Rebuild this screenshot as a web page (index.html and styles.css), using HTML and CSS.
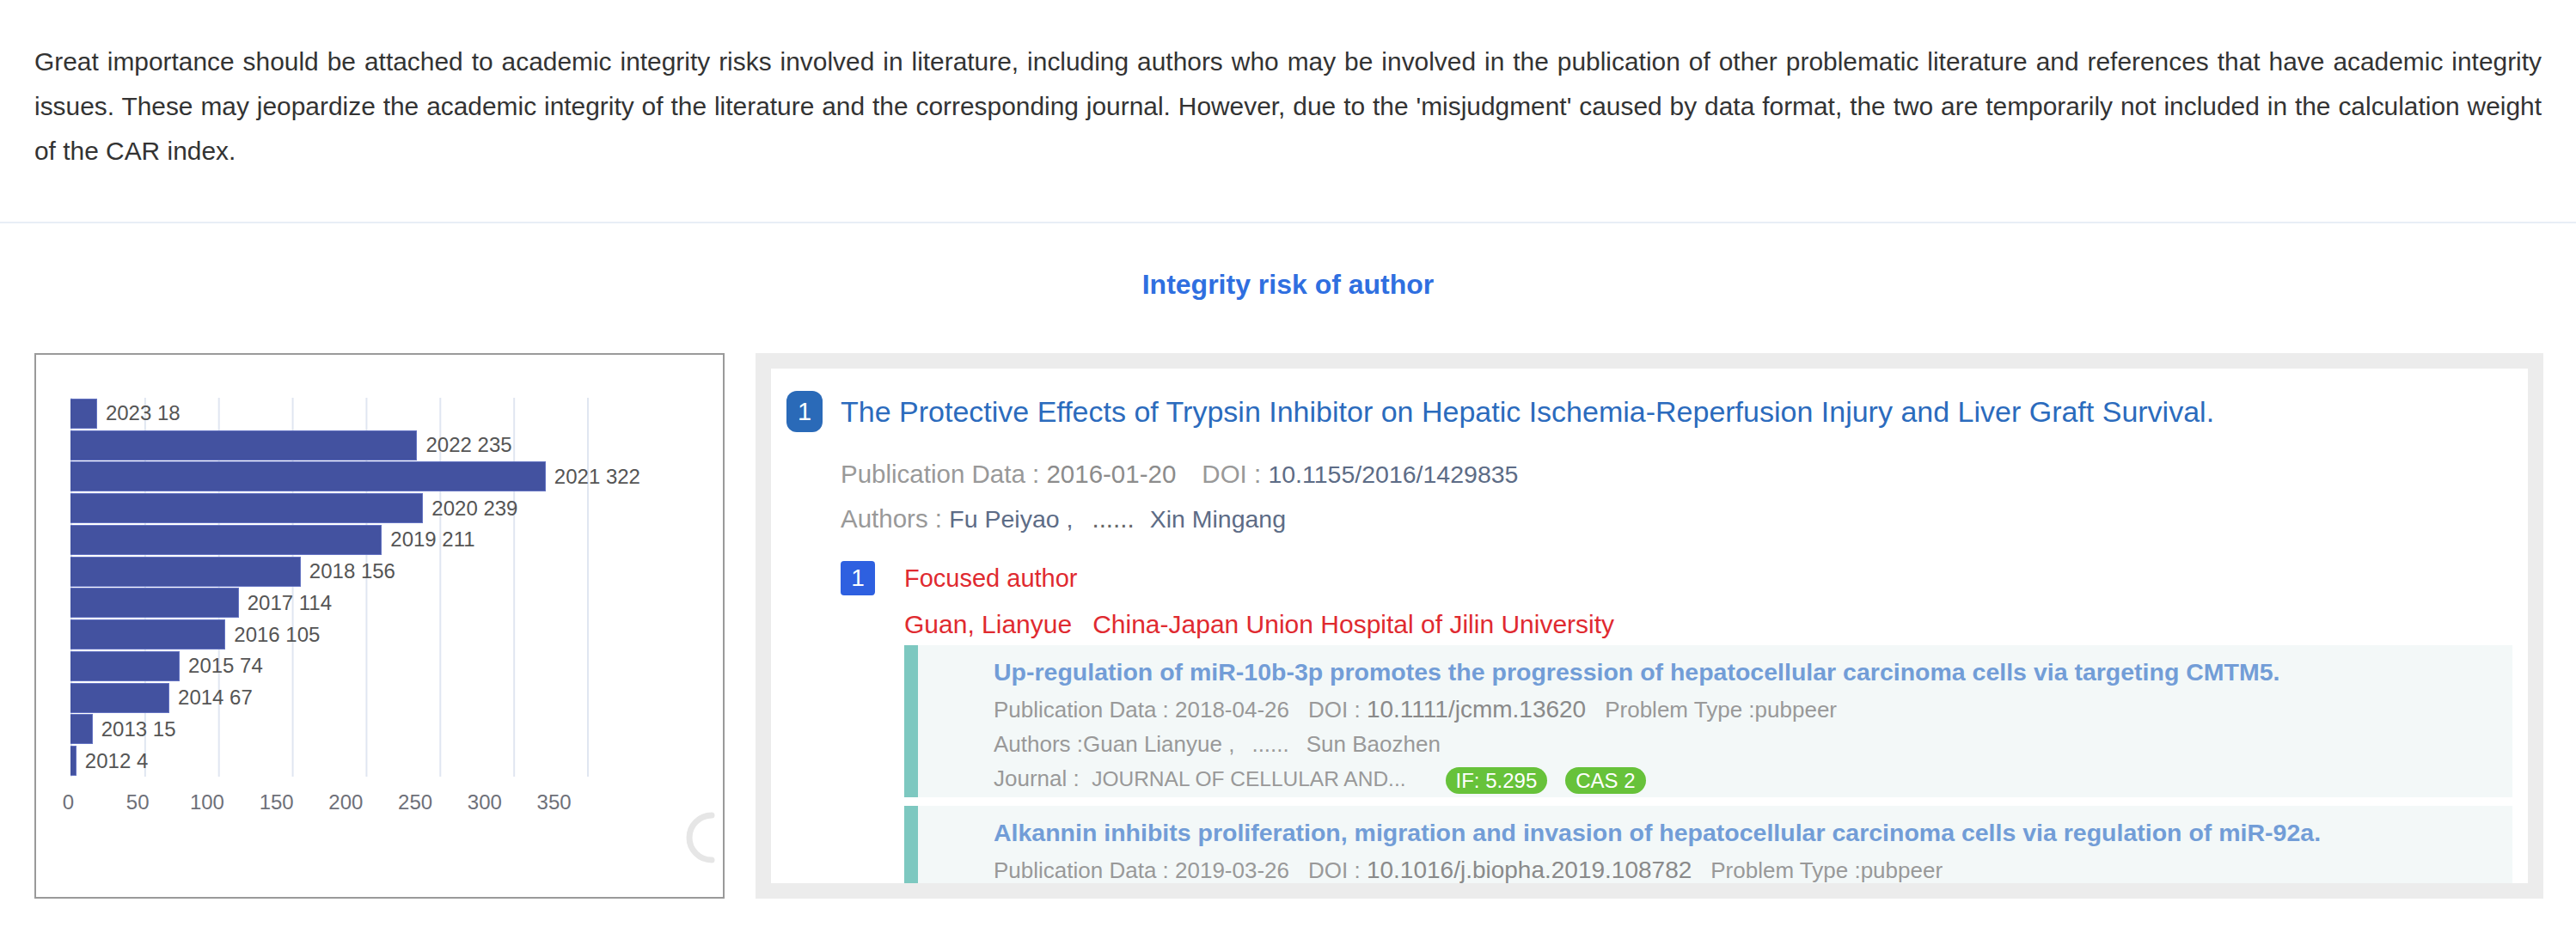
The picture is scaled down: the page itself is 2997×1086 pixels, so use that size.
FILE: index.html
```html
<!DOCTYPE html>
<html lang="en">
<head>
    <meta charset="UTF-8">
    <title>Integrity risk of author</title>
    <link rel="stylesheet" href="styles.css">
</head>
<body>
    <div class="notice">
        <p>Great importance should be attached to academic integrity risks involved in literature, including authors who may be involved in the publication of other problematic literature and references that have academic integrity issues. These may jeopardize the academic integrity of the literature and the corresponding journal. However, due to the 'misjudgment' caused by data format, the two are temporarily not included in the calculation weight of the CAR index.</p>
    </div>

    <h2 class="section-title">Integrity risk of author</h2>

    <div class="risk-row">
        <!-- yearly count chart -->
        <div class="chart-box">
            <div class="plot">
                <div class="bars">
                    <div class="bar-row"><div class="bar" style="--v:18"></div><span class="bar-label">2023 18</span></div>
                    <div class="bar-row"><div class="bar" style="--v:235"></div><span class="bar-label">2022 235</span></div>
                    <div class="bar-row"><div class="bar" style="--v:322"></div><span class="bar-label">2021 322</span></div>
                    <div class="bar-row"><div class="bar" style="--v:239"></div><span class="bar-label">2020 239</span></div>
                    <div class="bar-row"><div class="bar" style="--v:211"></div><span class="bar-label">2019 211</span></div>
                    <div class="bar-row"><div class="bar" style="--v:156"></div><span class="bar-label">2018 156</span></div>
                    <div class="bar-row"><div class="bar" style="--v:114"></div><span class="bar-label">2017 114</span></div>
                    <div class="bar-row"><div class="bar" style="--v:105"></div><span class="bar-label">2016 105</span></div>
                    <div class="bar-row"><div class="bar" style="--v:74"></div><span class="bar-label">2015 74</span></div>
                    <div class="bar-row"><div class="bar" style="--v:67"></div><span class="bar-label">2014 67</span></div>
                    <div class="bar-row"><div class="bar" style="--v:15"></div><span class="bar-label">2013 15</span></div>
                    <div class="bar-row"><div class="bar" style="--v:4"></div><span class="bar-label">2012 4</span></div>
                </div>
                <div class="x-axis">
                    <span>0</span><span>50</span><span>100</span><span>150</span><span>200</span><span>250</span><span>300</span><span>350</span>
                </div>
            </div>
            <svg class="spinner" width="70" height="70" viewBox="0 0 70 70">
                <path d="M35 9 A26 26 0 0 0 35 61" fill="none" stroke="#e6e6e6" stroke-width="7" stroke-linecap="round"/>
            </svg>
        </div>

        <!-- literature list -->
        <div class="list-panel">
            <div class="list-inner">
                <div class="article">
                    <div class="article-head">
                        <span class="num-badge">1</span>
                        <span class="article-title">The Protective Effects of Trypsin Inhibitor on Hepatic Ischemia-Reperfusion Injury and Liver Graft Survival.</span>
                    </div>
                    <div class="article-meta">
                        <div><span class="lbl">Publication Data : </span><span class="val">2016-01-20</span><span class="lbl sep">DOI : </span><span class="link">10.1155/2016/1429835</span></div>
                        <div><span class="lbl">Authors : </span><span class="link">Fu Peiyao</span><span class="link"> ,</span><span class="dots">......</span><span class="link">Xin Mingang</span></div>
                    </div>
                    <div class="focused">
                        <span class="sq-badge">1</span>
                        <span class="focused-label">Focused author</span>
                    </div>
                    <div class="focused-name"><span>Guan, Lianyue</span><span>China-Japan Union Hospital of Jilin University</span></div>

                    <div class="ref-card">
                        <div class="ref-title">Up-regulation of miR-10b-3p promotes the progression of hepatocellular carcinoma cells via targeting CMTM5.</div>
                        <div class="ref-line">Publication Data : 2018-04-26<span class="gap">DOI : </span><span class="ref-doi">10.1111/jcmm.13620</span><span class="gap">Problem Type :pubpeer</span></div>
                        <div class="ref-line">Authors :Guan Lianyue ,<span class="ref-dots">......</span>Sun Baozhen</div>
                        <div class="ref-line">Journal :&nbsp; <span class="journal">JOURNAL OF CELLULAR AND...</span><span class="tag first">IF: 5.295</span><span class="tag">CAS 2</span></div>
                    </div>
                    <div class="ref-card">
                        <div class="ref-title">Alkannin inhibits proliferation, migration and invasion of hepatocellular carcinoma cells via regulation of miR-92a.</div>
                        <div class="ref-line">Publication Data : 2019-03-26<span class="gap">DOI : </span><span class="ref-doi">10.1016/j.biopha.2019.108782</span><span class="gap">Problem Type :pubpeer</span></div>
                        <div class="ref-line">Authors :Guan Lianyue ,<span class="ref-dots">......</span>Sun Baozhen</div>
                    </div>
                </div>
            </div>
        </div>
    </div>
</body>
</html>
```

FILE: styles.css
```css
* {
    margin: 0;
    padding: 0;
    box-sizing: border-box;
}

body {
    font-family: 'Liberation Sans', Arial, sans-serif;
    background: #fff;
    color: #333;
}

.notice {
    padding: 46px 40px 56px;
    border-bottom: 2px solid #e8eef6;
}

.notice p {
    font-size: 29.9px;
    line-height: 52px;
    text-align: justify;
    color: #333;
}

.section-title {
    margin: 51px 0 60px;
    text-align: center;
    font-size: 32px;
    line-height: 40px;
    font-weight: 600;
    color: #2f6fe0;
}

.risk-row {
    display: flex;
    gap: 36px;
    padding: 0 38px 0 40px;
}

/* chart */
.chart-box {
    position: relative;
    width: 803px;
    height: 635px;
    border: 2px solid #9a9a9a;
    overflow: hidden;
    flex-shrink: 0;
}

.plot {
    margin: 50px 0 0 40px;
    width: 603px;
}

.bars {
    height: 441px;
    display: flex;
    flex-direction: column;
    background-image: linear-gradient(to right, #e0e6f1 2px, transparent 2px);
    background-size: 85.86px 100%;
}

.bar-row {
    flex: 1;
    display: flex;
    align-items: center;
}

.bar {
    width: calc(var(--v) * 1.717px);
    height: 35px;
    flex-shrink: 0;
    background: #4352a0;
    border: 1px solid #6473c2;
    border-left: none;
}

.bar-label {
    margin-left: 10px;
    font-size: 24px;
    color: #555;
    white-space: nowrap;
}

.x-axis {
    display: flex;
    margin-top: 18px;
    margin-left: -42.93px;
}

.x-axis span {
    width: 85.86px;
    text-align: center;
    font-size: 24px;
    line-height: 24px;
    color: #6e7079;
}

.spinner {
    position: absolute;
    left: 751px;
    top: 527px;
}

/* list */
.list-panel {
    flex: 1;
    height: 635px;
    background: #ececec;
    padding: 18px;
}

.list-inner {
    height: 100%;
    background: #fff;
    overflow: hidden;
}

.article {
    padding: 26px 18px 0;
}

.article-head {
    display: flex;
    align-items: center;
    gap: 21px;
}

.num-badge {
    width: 42px;
    height: 48px;
    border-radius: 12px;
    background: #2a6ab8;
    color: #fff;
    font-size: 29px;
    display: flex;
    align-items: center;
    justify-content: center;
    flex-shrink: 0;
}

.article-title {
    font-size: 34px;
    color: #2b6bbd;
}

.article-meta {
    margin-top: 23px;
    padding-left: 63px;
    font-size: 29.5px;
    line-height: 52px;
}

.lbl {
    color: #999;
}

.val {
    color: #8c8c8c;
}

.sep {
    margin-left: 30px;
}

.link {
    color: #5d6c86;
    font-size: 28.5px;
}

.dots {
    color: #666;
    margin: 0 18px 0 22px;
}

.focused {
    display: flex;
    align-items: center;
    gap: 34px;
    margin-top: 23px;
    padding-left: 63px;
}

.sq-badge {
    width: 40px;
    height: 40px;
    border-radius: 4px;
    background: #2e60e0;
    color: #fff;
    font-size: 28px;
    display: flex;
    align-items: center;
    justify-content: center;
}

.focused-label {
    font-size: 29px;
    color: #e02a30;
}

.focused-name {
    margin-top: 14px;
    padding-left: 137px;
    font-size: 30px;
    line-height: 40px;
    color: #e02a30;
    display: flex;
    gap: 24px;
}

.ref-card {
    margin: 4px 0 0 137px;
    padding: 8px 0 1px 88px;
    background: #f3f8f8;
    border-left: 16px solid #7dc8c0;
}

.ref-card + .ref-card {
    margin-top: 10px;
}

.ref-title {
    font-size: 28.5px;
    line-height: 47px;
    font-weight: bold;
    color: #729dd7;
}

.ref-line {
    font-size: 26px;
    line-height: 40px;
    color: #999;
    white-space: nowrap;
}

.gap {
    margin-left: 22px;
}

.ref-doi {
    font-size: 28px;
    color: #8a8a8a;
}

.ref-dots {
    margin: 0 20px;
}

.journal {
    font-size: 24.5px;
}

.tag {
    display: inline-block;
    height: 31px;
    line-height: 31px;
    padding: 0 12px;
    border-radius: 16px;
    background: #67c23a;
    color: #fff;
    font-size: 24px;
    margin-left: 21px;
    vertical-align: middle;
}

.tag.first {
    margin-left: 46px;
}
```
